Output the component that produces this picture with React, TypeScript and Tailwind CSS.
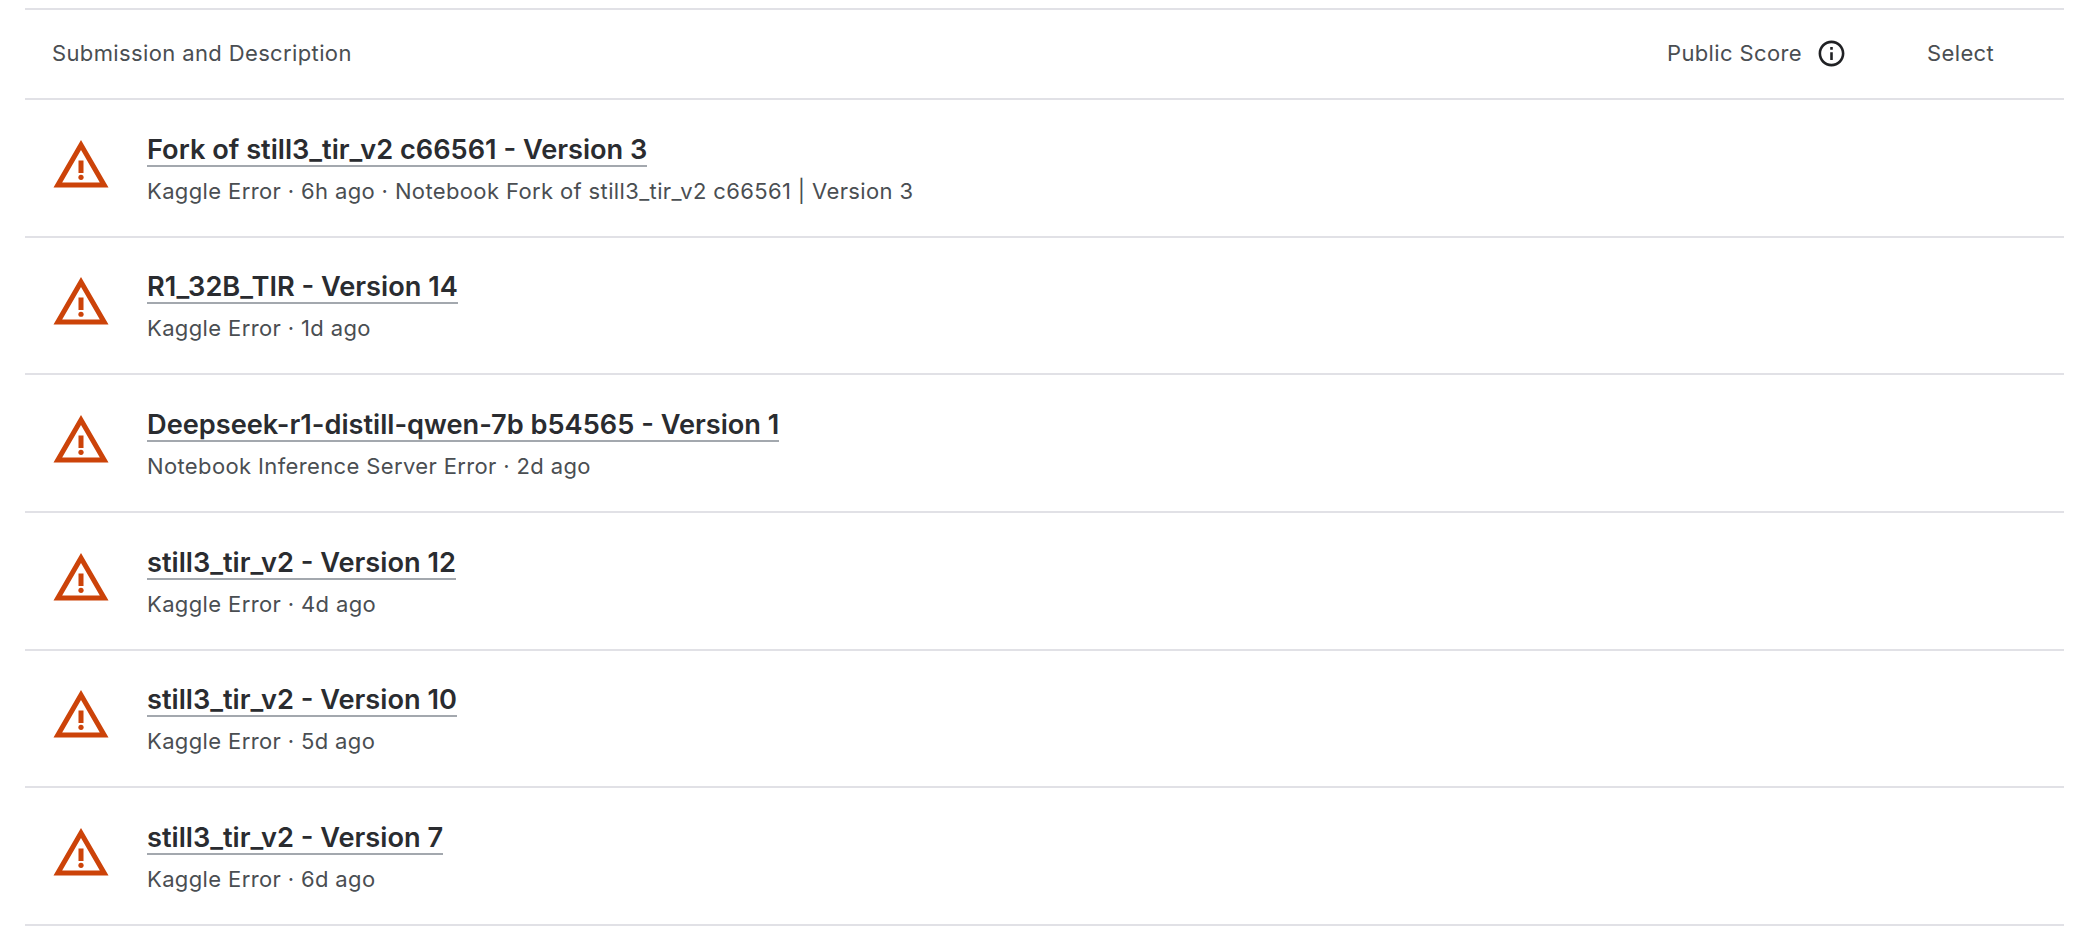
const rows = [
  { title: "Fork of still3_tir_v2 c66561 - Version 3", sub: "Kaggle Error · 6h ago · Notebook Fork of still3_tir_v2 c66561 | Version 3" },
  { title: "R1_32B_TIR - Version 14", sub: "Kaggle Error · 1d ago" },
  { title: "Deepseek-r1-distill-qwen-7b b54565 - Version 1", sub: "Notebook Inference Server Error · 2d ago" },
  { title: "still3_tir_v2 - Version 12", sub: "Kaggle Error · 4d ago" },
  { title: "still3_tir_v2 - Version 10", sub: "Kaggle Error · 5d ago" },
  { title: "still3_tir_v2 - Version 7", sub: "Kaggle Error · 6d ago" },
];

function Warn() {
  return (
    <svg viewBox="0 0 24 24" className="w-[60px] h-[60px] shrink-0 mb-[6px]" fill="#cc4309">
      <path d="M12 5.99L19.53 19H4.47L12 5.99M12 2L1 21h22L12 2z" />
      <rect x="11" y="10.2" width="2" height="5" />
      <circle cx="12" cy="16.9" r="1.05" />
    </svg>
  );
}

function Info() {
  return (
    <svg viewBox="0 0 24 24" className="w-[31px] h-[31px] mt-[1px]" fill="#202124">
      <path d="M11 7h2v2h-2zm0 4h2v6h-2zm1-9C6.48 2 2 6.48 2 12s4.48 10 10 10 10-4.48 10-10S17.52 2 12 2zm0 18c-4.41 0-8-3.59-8-8s3.59-8 8-8 8 3.59 8 8-3.59 8-8 8z" />
    </svg>
  );
}

export default function App() {
  return (
    <div className="w-[2089px] h-[930px] overflow-hidden bg-white pt-2 pl-[25px] pr-[25px] font-['Inter',sans-serif]">
      <div className="flex items-center h-[92px] pb-[2px] border-y-2 border-[#e1e1e6] text-[22px] text-[#4a4e52] tracking-[0.37px]">
        <div className="pl-[27px] flex-1">Submission and Description</div>
        <div className="flex items-center gap-[14px]">
          <span>Public Score</span>
          <Info />
        </div>
        <div className="ml-[80px] w-[137px]">Select</div>
      </div>
      {rows.map((r) => (
        <div key={r.title} className="flex items-center h-[137.67px] border-b-2 border-[#e1e1e6] pl-[26px]">
          <Warn />
          <div className="ml-[36px] mt-[4px] flex flex-col items-start">
            <div className="text-[27.2px] leading-[31px] font-semibold text-[#2a2c30] border-b-2 border-[#a3a8ae]">{r.title}</div>
            <div className="mt-[9px] text-[22px] leading-[30px] text-[#4a4e52] tracking-[0.37px]">{r.sub}</div>
          </div>
        </div>
      ))}
    </div>
  );
}
